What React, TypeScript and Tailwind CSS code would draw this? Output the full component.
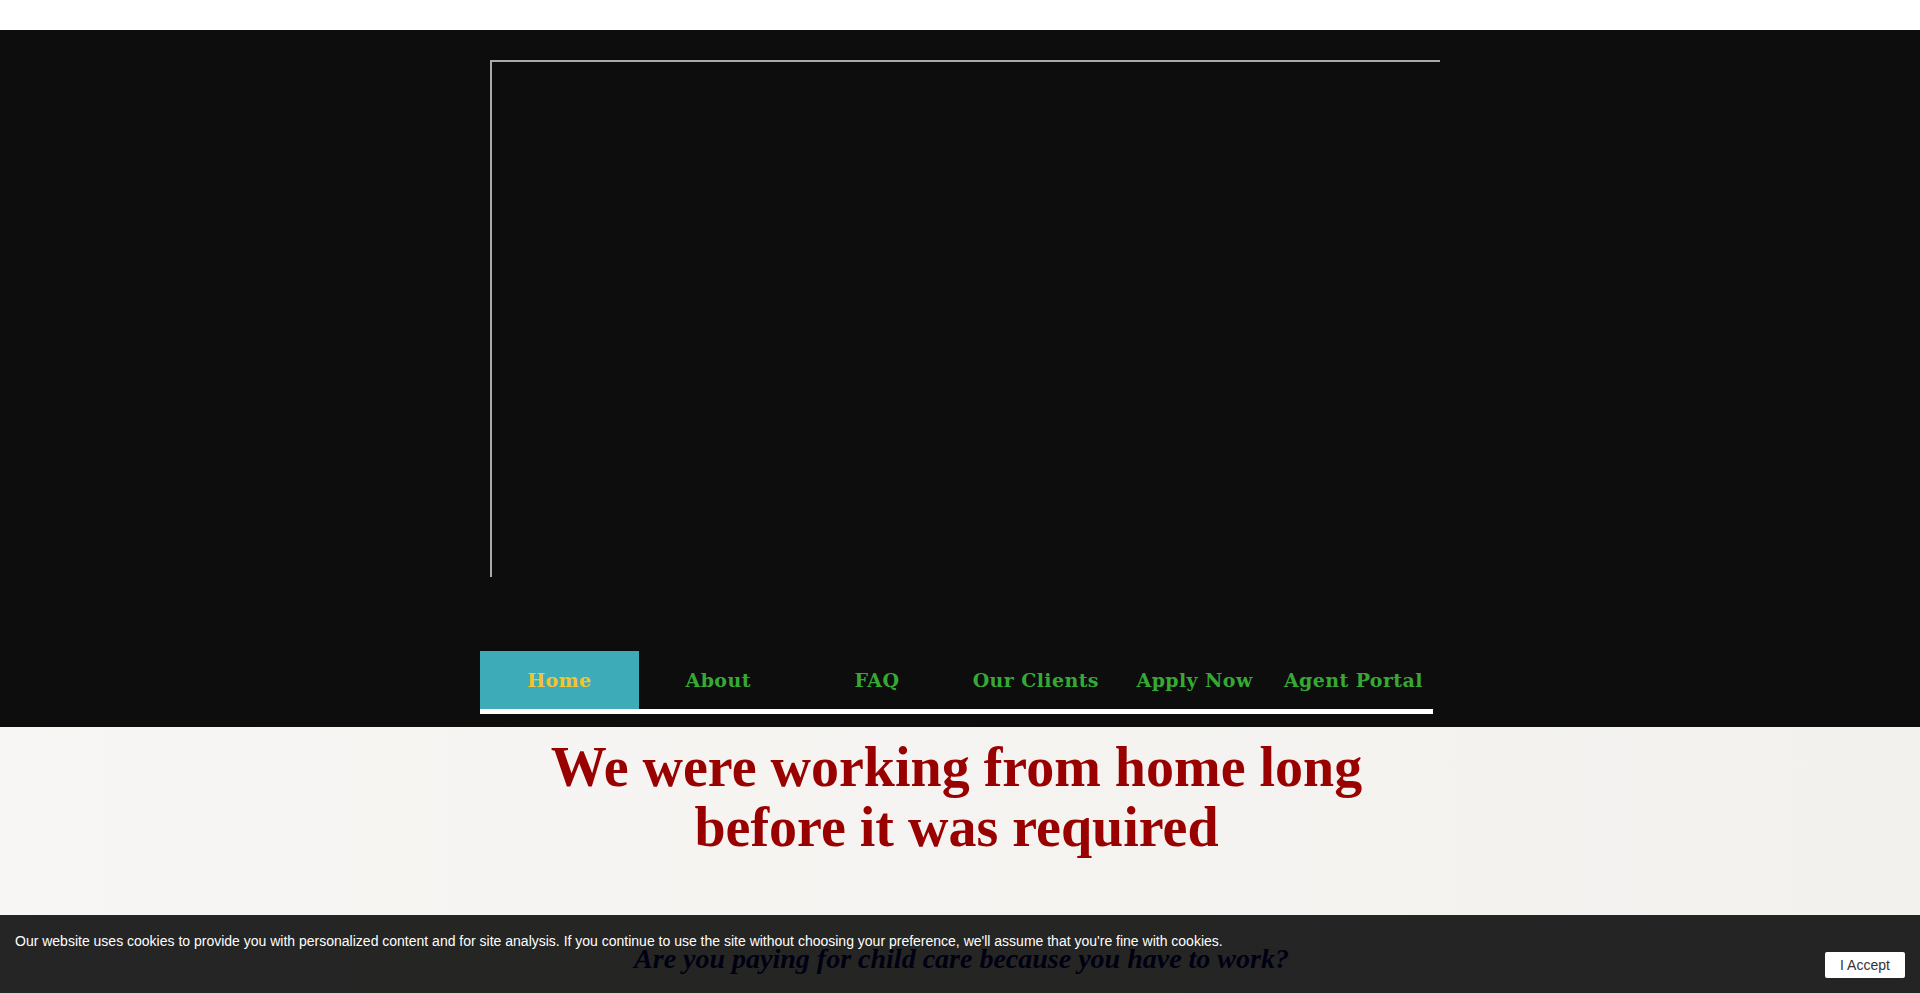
const navItems = ["Home", "About", "FAQ", "Our Clients", "Apply Now", "Agent Portal"];

const App = () => {
  return (
    <div className="relative h-screen overflow-hidden bg-[#f5f4f2] font-['Liberation_Sans',sans-serif]">
      <div className="h-[30px] bg-white" />

      <div className="h-[697px] bg-[#0d0d0d] pt-[30px]">
        <div className="mx-auto w-[960px]">
          <div className="ml-[10px] h-[517px] w-[950px] border-t-2 border-l-2 border-[#aaaaaa]" />

          <nav className="mt-[74px] flex w-[953px] border-b-[5px] border-white">
            {navItems.map((item, index) => (
              <a
                key={item}
                className={`flex h-[58px] w-[158.8px] items-center justify-center px-2 text-center font-['DejaVu_Serif',serif] text-[19px] leading-[23px] font-bold tracking-[0.4px] ${
                  index === 0 ? "bg-[#3eabb8] text-[#f4c430]" : "text-[#36a935]"
                }`}
              >
                {item}
              </a>
            ))}
          </nav>
        </div>
      </div>

      <div className="bg-gradient-to-r from-[#f7f6f4] to-[#f2f1ee] h-full">
        <div className="mx-auto w-[953px] -translate-x-[3.5px] text-center">
          <h1 className="pt-[10px] font-['Liberation_Serif',serif] text-[56px] leading-[60px] font-bold text-[#990000]">
            We were working from home long
            <br />
            before it was required
          </h1>
          <h2 className="mt-[86px] pl-[10px] font-['Liberation_Serif',serif] text-[28px] leading-[32px] font-bold text-[#000080] italic">
            Are you paying for child care because you have to work?
          </h2>
        </div>
      </div>

      <div className="absolute right-0 bottom-0 left-0 h-[78px] bg-black/85 px-[15px] pt-[15px]">
        <p className="text-[14px] leading-[22px] text-white">
          Our website uses cookies to provide you with personalized content and for site analysis. If you continue to use the site without choosing your preference, we'll assume that you're fine with cookies.
        </p>
        <div className="flex justify-end">
          <button className="h-[26px] w-[80px] rounded-[2px] bg-white text-[14px] text-[#333333]">
            I Accept
          </button>
        </div>
      </div>
    </div>
  );
};

export default App;
